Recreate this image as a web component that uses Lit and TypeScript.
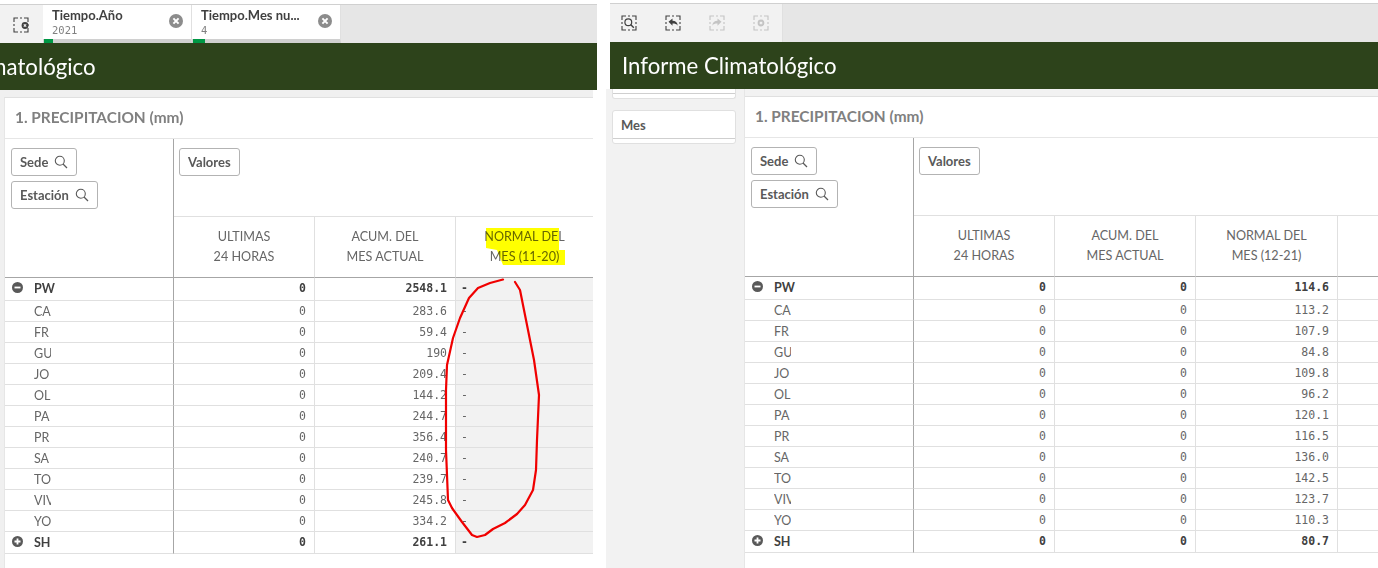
import { LitElement, html, css, svg } from "lit";
import { customElement } from "lit/decorators.js";

const labels = ["CA", "FR", "GU", "JO", "OL", "PA", "PR", "SA", "TO", "VIV", "YO"];
const acum = ["283.6", "59.4", "190", "209.4", "144.2", "244.7", "356.4", "240.7", "239.7", "245.8", "334.2"];
const normal = ["113.2", "107.9", "84.8", "109.8", "96.2", "120.1", "116.5", "136.0", "142.5", "123.7", "110.3"];

const searchIcon = html`<svg class="search" width="14" height="14" viewBox="0 0 14 14"><circle cx="5.8" cy="5.8" r="4.5" fill="none" stroke="#595959" stroke-width="1.1"/><path d="M9 9l4 4" stroke="#595959" stroke-width="1.3" fill="none"/></svg>`;

const dashed = (c: string) => svg`<path d="M1 5V1h4M11 1h4v4M15 11v4h-4M5 15H1v-4M7 1h2M7 15h2M1 7v2M15 7v2" fill="none" stroke="${c}" stroke-width="1.1"/>`;

const tbIcon = (kind: string, c: string) => html`<svg width="16" height="16" viewBox="0 0 16 16">
  ${dashed(c)}
  ${kind === "search" ? svg`<circle cx="7.3" cy="7.3" r="3.4" fill="none" stroke="${c}" stroke-width="1.2"/><path d="M9.8 9.8l3 3" stroke="${c}" stroke-width="1.4"/>` : ""}
  ${kind === "back" ? svg`<path d="M3.5 6.8L7.5 3.6v2.2c3 0 5 1.6 5.2 5-1.1-1.8-2.7-2.2-5.2-2.2V10.8z" fill="${c}"/>` : ""}
  ${kind === "forward" ? svg`<path d="M12.5 6.8L8.5 3.6v2.2c-3 0-5 1.6-5.2 5 1.1-1.8 2.7-2.2 5.2-2.2V10.8z" fill="${c}"/>` : ""}
  ${kind === "clear" ? svg`<circle cx="12" cy="8.5" r="3.4" fill="${c}"/><path d="M10.8 7.3l2.4 2.4M13.2 7.3l-2.4 2.4" stroke="#f2f2f2" stroke-width="1.1"/>` : ""}
  ${kind === "clearc" ? svg`<circle cx="8" cy="8" r="3.4" fill="${c}"/><path d="M6.8 6.8l2.4 2.4M9.2 6.8l-2.4 2.4" stroke="#f2f2f2" stroke-width="1.1"/>` : ""}
</svg>`;

const closeIcon = html`<svg class="close" width="14" height="14" viewBox="0 0 14 14"><circle cx="7" cy="7" r="7" fill="#8c8c8c"/><path d="M4.4 4.4l5.2 5.2M9.6 4.4l-5.2 5.2" stroke="#fff" stroke-width="2"/></svg>`;

const toggle = (plus: boolean) => html`<svg class="toggle" width="11" height="11" viewBox="0 0 11 11"><circle cx="5.5" cy="5.5" r="5.5" fill="#595959"/><path d="M2.5 5.5h6${plus ? "M5.5 2.5v6" : ""}" stroke="#fff" stroke-width="1.8"/></svg>`;

@customElement("app-root")
export class AppRoot extends LitElement {
  static styles = css`
    :host { display: flex; width: 1378px; height: 568px; overflow: hidden; background: #fff; font-family: Lato, "Noto Sans", sans-serif; color: #595959; }
    .pane { position: relative; display: flex; flex-direction: column; overflow: hidden; height: 568px; }
    .pane.left { width: 597px; padding-top: 4px; box-sizing: border-box; }
    .pane.right { width: 772px; margin-left: 9px; padding-top: 3px; box-sizing: border-box; }
    .pane.right .toolbar, .pane.right .banner { margin-left: 4px; }

    .toolbar { display: flex; height: 39px; border-top: 1px solid #d0d0d0; background: #e6e6e6; box-sizing: border-box; flex: none; }
    .tools { display: flex; align-items: center; background: #f2f2f2; box-sizing: border-box; }
    .left .tools { width: 43px; padding-left: 13px; padding-top: 1px; }
    .right .tools { width: 173px; padding-left: 11px; gap: 28px; border-right: 1px solid #e0e0e0; }
    .tools svg { display: block; }
    .tab { width: 149px; height: 38px; box-sizing: border-box; position: relative; background: #fff; border-right: 1px solid #e0e0e0; border-bottom: 4px solid #d0d0d0; padding: 3px 0 0 9px; }
    .tab .field { font-weight: 700; font-size: 13px; line-height: 15px; color: #404040; white-space: nowrap; }
    .tab .val { font-family: "DejaVu Sans Mono", monospace; font-size: 10.5px; line-height: 14px; color: #808080; }
    .tab .close { position: absolute; right: 8px; top: 9px; }
    .tab .bar { position: absolute; left: 1px; bottom: -4px; height: 4px; background: #009845; }

    .banner { height: 47px; flex: none; background: #2d431b; color: #fff; font-size: 22.2px; line-height: 47px; white-space: nowrap; overflow: hidden; padding-left: 12px; }
    .left .banner { padding-left: 0; text-indent: -119px; }

    .body { display: flex; flex: 1; min-height: 0; }
    .strip { width: 4px; background: #f0f0f0; flex: none; }
    .sidebar { width: 139px; box-sizing: border-box; background: #f2f2f2; flex: none; padding: 0 8px 0 6px; border-right: 1px solid #e6e6e6; }
    .lb { background: #fff; border: 1px solid #e0e0e0; border-radius: 3px; box-sizing: border-box; }
    .lb.cut { height: 10px; border-top: none; border-radius: 0 0 3px 3px; position: relative; }
    .lb.mes { height: 34px; margin-top: 11px; font-weight: 700; font-size: 13px; color: #595959; padding: 6px 0 0 8px; position: relative; }
    .lb::after { content: ""; position: absolute; left: 0; right: 0; bottom: 4px; border-bottom: 1px solid #cfcfcf; }

    .main { flex: 1; min-width: 0; display: flex; flex-direction: column; }
    .band { height: 7px; flex: none; background: #f0f0f0; }
    .left .main { margin-right: 4px; }
    .card { flex: 1; background: #fff; border-top: 1px solid #e0e0e0; border-left: 1px solid #e6e6e6; }
    .right .card { border-left: none; }
    .title { height: 41px; box-sizing: border-box; border-bottom: 1px solid #e6e6e6; font-weight: 700; font-size: 15.4px; line-height: 39px; padding-left: 10px; color: #808080; white-space: nowrap; }

    .table { display: grid; }
    .left .table { grid-template-columns: 169px 141px 141px 1fr; }
    .right .table { grid-template-columns: 169px 141px 141px 142px 1fr; }

    .corner { grid-row: span 2; border-right: 1px solid #a6a6a6; border-bottom: 1px solid #a6a6a6; padding: 9px 0 0 6px; display: flex; flex-direction: column; align-items: flex-start; gap: 5px; height: 139px; box-sizing: border-box; }
    .chip { display: flex; align-items: center; gap: 6px; height: 28px; box-sizing: border-box; padding: 0 8px; border: 1px solid #b3b3b3; border-radius: 3px; font-weight: 700; font-size: 13px; color: #595959; width: fit-content; }
    .search { display: block; }
    .values { grid-column: 2 / -1; height: 78px; box-sizing: border-box; border-bottom: 1px solid #e0e0e0; padding: 9px 0 0 5px; }
    .hcell { height: 61px; box-sizing: border-box; border-right: 1px solid #e0e0e0; border-bottom: 1px solid #a6a6a6; text-align: center; font-size: 12.6px; line-height: 20px; padding-top: 10px; color: #666; }
    .hcell.end { border-right: none; }

    .cell { height: 21px; box-sizing: border-box; border-right: 1px solid #e0e0e0; border-bottom: 1px solid #e0e0e0; font-family: "DejaVu Sans Mono", monospace; font-size: 11.5px; line-height: 21px; text-align: right; padding-right: 8px; color: #666; }
    .cell.end { border-right: none; }
    .cell.empty { padding: 0; }
    .cell.dash { text-align: left; padding: 0 0 0 5px; background: #f2f2f2; }
    .cell.label { border-right: 1px solid #a6a6a6; font-family: Lato, "Noto Sans", sans-serif; font-size: 12.5px; text-align: left; padding: 0; display: flex; align-items: center; position: relative; }
    .cell.label .txt { display: block; position: absolute; left: 29px; width: 17px; overflow: hidden; white-space: nowrap; }
    .cell.label.top .txt { width: 24px; }
    .toggle { position: absolute; left: 7px; top: 4px; display: block; }
    .cell.top { height: 23px; line-height: 20px; font-weight: 700; color: #404040; }
    .cell.bot { height: 22px; line-height: 20px; font-weight: 700; color: #404040; }

    .overlay { position: absolute; left: 0; top: 0; pointer-events: none; }
    .marker { mix-blend-mode: multiply; }
  `;

  private row(label: string, vals: string[], kind: string, dash: boolean) {
    return html`
      <div class="cell label ${kind}">
        ${kind === "top" ? toggle(false) : kind === "bot" ? toggle(true) : ""}
        <span class="txt">${label}</span>
      </div>
      ${vals.map((v) => html`<div class="cell ${kind}">${v}</div>`)}
      ${dash
        ? html`<div class="cell dash end ${kind}">-</div>`
        : html`<div class="cell empty end ${kind}"></div>`}
    `;
  }

  private table(heads: string[][], rows: { l: string; v: string[]; k: string }[], dash: boolean) {
    return html`
      <div class="title">1. PRECIPITACION (mm)</div>
      <div class="table">
        <div class="corner">
          <div class="chip">Sede ${searchIcon}</div>
          <div class="chip">Estación ${searchIcon}</div>
        </div>
        <div class="values"><div class="chip">Valores</div></div>
        ${heads.map(
          (h, i) => html`<div class="hcell ${dash && i === heads.length - 1 ? "end" : ""}">${h[0]}<br />${h[1]}</div>`
        )}
        ${dash ? "" : html`<div class="hcell end"></div>`}
        ${rows.map((r) => this.row(r.l, r.v, r.k, dash))}
      </div>
    `;
  }

  render() {
    const leftRows = [
      { l: "PW", v: ["0", "2548.1"], k: "top" },
      ...labels.map((l, i) => ({ l, v: ["0", acum[i]], k: "" })),
      { l: "SH", v: ["0", "261.1"], k: "bot" },
    ];
    const rightRows = [
      { l: "PW", v: ["0", "0", "114.6"], k: "top" },
      ...labels.map((l, i) => ({ l, v: ["0", "0", normal[i]], k: "" })),
      { l: "SH", v: ["0", "0", "80.7"], k: "bot" },
    ];
    const h1 = ["ULTIMAS", "24 HORAS"];
    const h2 = ["ACUM. DEL", "MES ACTUAL"];
    return html`
      <section class="pane left">
        <div class="toolbar">
          <div class="tools">${tbIcon("clear", "#404040")}</div>
          <div class="tab">
            <div class="field">Tiempo.Año</div>
            <div class="val">2021</div>
            ${closeIcon}
            <div class="bar" style="width:9px"></div>
          </div>
          <div class="tab">
            <div class="field">Tiempo.Mes nu...</div>
            <div class="val">4</div>
            ${closeIcon}
            <div class="bar" style="width:12px"></div>
          </div>
        </div>
        <div class="banner">Informe Climatológico</div>
        <div class="body">
          <div class="strip"></div>
          <div class="main">
            <div class="band"></div>
            <div class="card">${this.table([h1, h2, ["NORMAL DEL", "MES (11-20)"]], leftRows, true)}</div>
          </div>
        </div>
        <svg class="overlay marker" width="597" height="568">
          <path d="M486 228L559 228L559 250L565 250L565 265L503 265L497 250L486 248Z" fill="#ffff00"/>
        </svg>
        <svg class="overlay" width="597" height="568">
          <path d="M503 279.5L490 283L478 288L469 298L460 318L453 338L447 365L446 390L446 450L448 500L452 508L462 522L472 535L477 537L485 535L493 529L505 523L517 514L525 505L533 490L536 470L537 440L539 395L534 360L527 325L520 290L515 282" fill="none" stroke="#f00000" stroke-width="2.2" stroke-linejoin="round" stroke-linecap="round"/>
        </svg>
      </section>
      <section class="pane right">
        <div class="toolbar">
          <div class="tools">
            ${tbIcon("search", "#404040")}${tbIcon("back", "#404040")}${tbIcon("forward", "#c4c4c4")}${tbIcon("clearc", "#c4c4c4")}
          </div>
        </div>
        <div class="banner">Informe Climatológico</div>
        <div class="body">
          <div class="sidebar">
            <div class="lb cut"></div>
            <div class="lb mes">Mes</div>
          </div>
          <div class="main">
            <div class="band" style="background:#f2f2f2"></div>
            <div class="card">${this.table([h1, h2, ["NORMAL DEL", "MES (12-21)"]], rightRows, false)}</div>
          </div>
        </div>
      </section>
    `;
  }
}
